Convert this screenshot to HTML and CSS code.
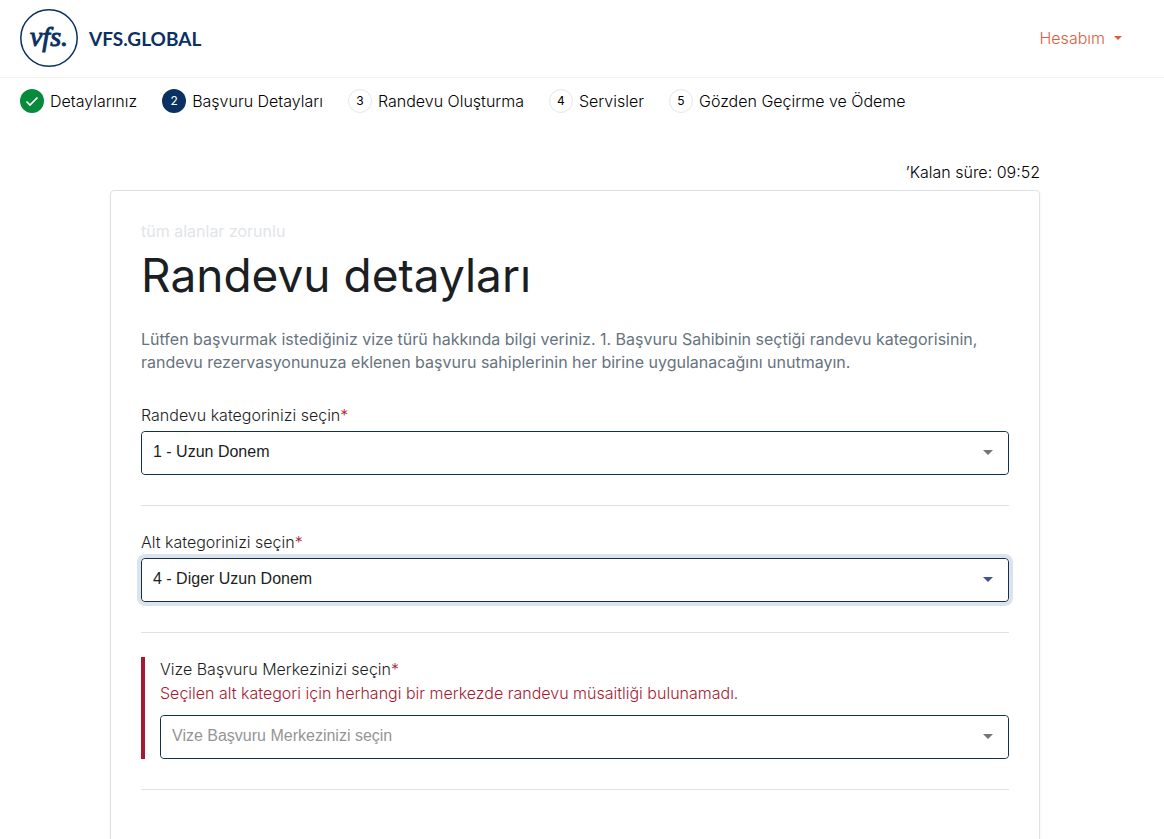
FILE: index.html
```html
<!DOCTYPE html>
<html lang="tr">
<head>
    <meta charset="UTF-8">
    <meta name="viewport" content="width=device-width, initial-scale=1.0">
    <title>Randevu detayları</title>
    <link rel="stylesheet" href="styles.css">
</head>
<body>
    <header class="header">
        <a href="#" class="logo">
            <svg class="logo-mark" viewBox="0 0 58 58" aria-hidden="true">
                <circle cx="29" cy="29" r="28.2" fill="none" stroke="#0a3161" stroke-width="1.5"/>
                <text x="29" y="37" text-anchor="middle" class="logo-script">vfs.</text>
            </svg>
            <span class="logo-name">VFS.GLOBAL</span>
        </a>
        <button type="button" class="account">Hesabım <span class="caret"></span></button>
    </header>

    <ol class="steps">
        <li>
            <span class="badge done">
                <svg viewBox="0 0 24 24" aria-hidden="true"><path d="M6.5 12.5l3.5 3.5 7.5-7.5" fill="none" stroke="#fff" stroke-width="1.7"/></svg>
            </span>
            Detaylarınız
        </li>
        <li><span class="badge current">2</span>Başvuru Detayları</li>
        <li><span class="badge">3</span>Randevu Oluşturma</li>
        <li><span class="badge">4</span>Servisler</li>
        <li><span class="badge">5</span>Gözden Geçirme ve Ödeme</li>
    </ol>

    <main class="main">
        <div class="content">
            <div class="timer">’Kalan süre: 09:52</div>

            <form class="card">
                <div class="required-note">tüm alanlar zorunlu</div>
                <h1>Randevu detayları</h1>
                <p class="intro">Lütfen başvurmak istediğiniz vize türü hakkında bilgi veriniz. 1. Başvuru Sahibinin seçtiği randevu kategorisinin, randevu rezervasyonunuza eklenen başvuru sahiplerinin her birine uygulanacağını unutmayın.</p>

                <div class="form-group">
                    <label for="category">Randevu kategorinizi seçin<span class="star">*</span></label>
                    <div class="select-box">
                        <select id="category">
                            <option>1 - Uzun Donem</option>
                        </select>
                    </div>
                </div>

                <div class="form-group">
                    <label for="subCategory">Alt kategorinizi seçin<span class="star">*</span></label>
                    <div class="select-box active">
                        <select id="subCategory">
                            <option>4 - Diger Uzun Donem</option>
                        </select>
                    </div>
                </div>

                <div class="form-group">
                    <div class="invalid">
                        <label for="center">Vize Başvuru Merkezinizi seçin<span class="star">*</span></label>
                        <div class="error">Seçilen alt kategori için herhangi bir merkezde randevu müsaitliği bulunamadı.</div>
                        <div class="select-box">
                            <select id="center" class="placeholder">
                                <option>Vize Başvuru Merkezinizi seçin</option>
                            </select>
                        </div>
                    </div>
                </div>
            </form>
        </div>
    </main>
</body>
</html>
```
FILE: styles.css
```css
:root {
    --navy: #0a3161;
    --field-border: #12304f;
    --orange: #d9603b;
    --green: #078a3c;
    --red: #a71930;
    --text-color: #1b1e22;
    --text-light: #67737e;
    --line: #dfe1e5;
}

* {
    margin: 0;
    padding: 0;
    box-sizing: border-box;
}

body {
    min-height: 100vh;
    background: #fff;
    color: var(--text-color);
    font-family: Inter, "Open Sans", sans-serif;
    font-size: 16px;
    font-weight: 300;
    line-height: 24px;
}

.header {
    display: flex;
    justify-content: space-between;
    align-items: center;
    padding: 9px 42px 10px 20px;
    border-bottom: 1px solid #f3f3f3;
}

.logo {
    display: flex;
    align-items: center;
    gap: 11px;
    color: var(--navy);
    text-decoration: none;
}

.logo-mark {
    width: 58px;
    height: 58px;
}

.logo-script {
    fill: var(--navy);
    stroke: var(--navy);
    stroke-width: 1px;
    font-family: "Liberation Serif", serif;
    font-size: 28px;
    font-style: italic;
    font-weight: 400;
}

.logo-name {
    padding-top: 2px;
    font-family: Lato, sans-serif;
    font-size: 19px;
    font-weight: 700;
}

.account {
    display: flex;
    align-items: center;
    gap: 9px;
    border: none;
    background: none;
    color: var(--orange);
    font: inherit;
    cursor: pointer;
}

.caret {
    border: 4px solid transparent;
    border-top-color: var(--orange);
    border-bottom: none;
}

.steps {
    display: flex;
    flex-wrap: wrap;
    gap: 12px 25px;
    padding: 11px 20px;
    list-style: none;
    color: #000;
}

.steps li {
    display: flex;
    align-items: center;
    gap: 6px;
}

.badge {
    display: flex;
    justify-content: center;
    align-items: center;
    width: 24px;
    height: 24px;
    border: 1px solid #e4e6ec;
    border-radius: 50%;
    font-size: 12px;
    font-weight: 400;
}

.badge.done {
    border: none;
    background: var(--green);
}

.badge.current {
    border: none;
    background: var(--navy);
    color: #fff;
}

.main {
    padding: 36px 124px 0 110px;
}

.content {
    max-width: 930px;
    margin: 0 auto;
}

.timer {
    margin-bottom: 6px;
    color: #000;
    text-align: right;
}

.card {
    padding: 28px 30px 60px;
    border: 1px solid var(--line);
    border-radius: 4px;
    box-shadow: 0 1px 3px rgba(0, 0, 0, 0.06);
}

.required-note {
    color: #e2e4e8;
    font-weight: 400;
}

h1 {
    margin: 4px 0 25px;
    font-size: 46px;
    font-weight: 400;
    line-height: 56px;
}

.intro {
    margin-bottom: 29px;
    color: var(--text-light);
    font-weight: 400;
    line-height: 23px;
}

.form-group {
    margin-bottom: 24px;
    padding-bottom: 30px;
    border-bottom: 1px solid var(--line);
}

label {
    display: block;
    margin-bottom: 4px;
}

.star,
.error {
    color: var(--red);
}

.select-box {
    position: relative;
    border: 1px solid var(--field-border);
    border-radius: 4px;
}

.select-box::after {
    content: "";
    position: absolute;
    top: 18px;
    right: 15px;
    border: 5px solid transparent;
    border-top-color: #757575;
    border-bottom: none;
    pointer-events: none;
}

.select-box.active {
    box-shadow: 0 0 0 4px #dbe4ec;
}

.select-box.active::after {
    border-top-color: #3f51a5;
}

select {
    display: block;
    width: 100%;
    height: 42px;
    padding: 0 36px 4px 11px;
    border: none;
    border-radius: 4px;
    outline: none;
    appearance: none;
    background: #fff;
    color: var(--text-color);
    font-family: "Liberation Sans", Arial, sans-serif;
    font-size: 16px;
}

select.placeholder {
    color: #959595;
}

.invalid {
    padding-left: 15px;
    border-left: 4px solid var(--red);
}

.invalid label {
    margin-bottom: 0;
}

.error {
    margin-bottom: 10px;
}
```
